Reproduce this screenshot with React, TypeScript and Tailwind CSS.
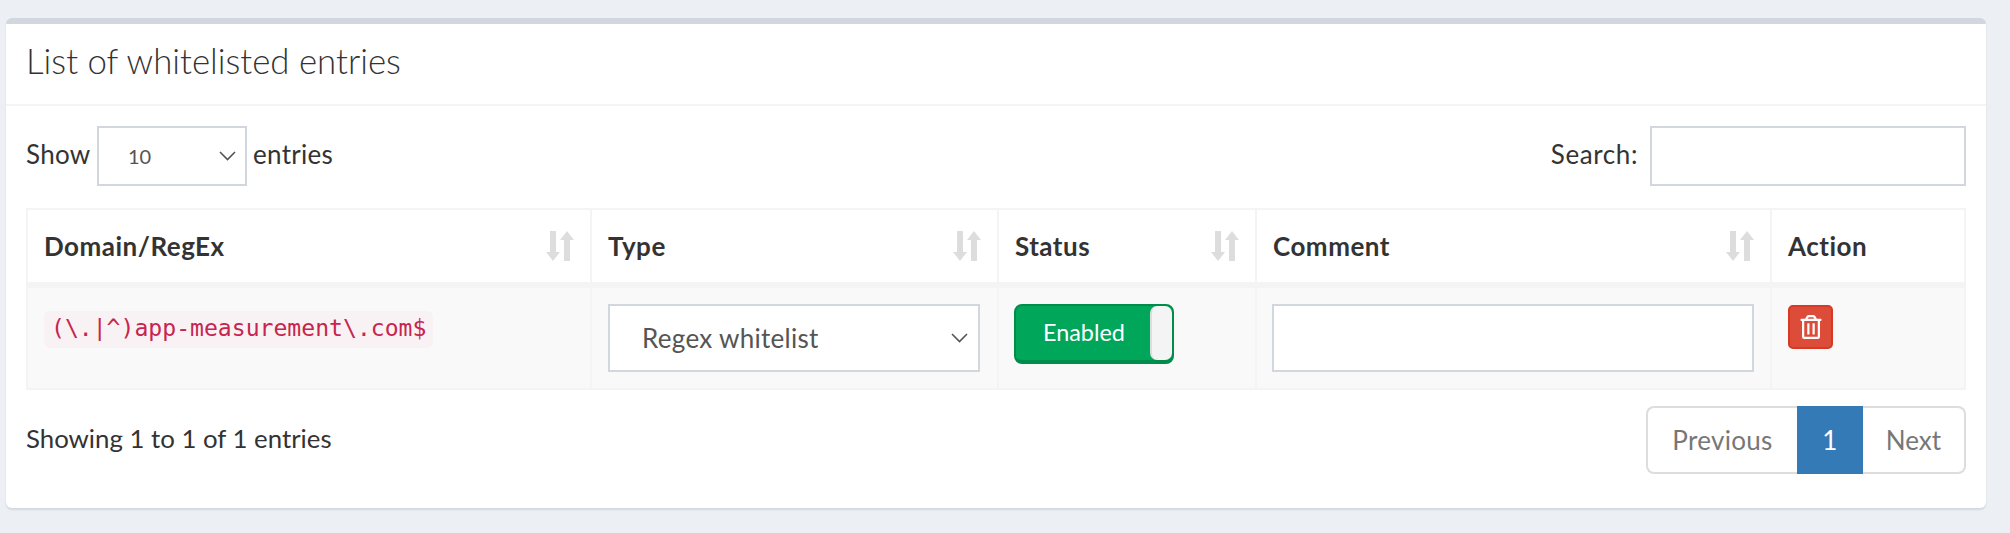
import React from 'react';
import { FaRegTrashAlt } from 'react-icons/fa';

const SortIcon = () => (
  <svg width="28" height="30" viewBox="0 0 28 30" className="shrink-0 text-[#dddddd]" fill="currentColor">
    <path d="M4 0h6v21h4l-7 9-7-9h4z" />
    <path d="M21 0l7 9h-4v21h-6V9h-4z" />
  </svg>
);

const Chevron = () => (
  <svg width="17" height="10" viewBox="0 0 17 10" fill="none" stroke="#555555" strokeWidth="1.6" className="shrink-0">
    <path d="M1 1l7.5 7.5L16 1" />
  </svg>
);

const SortHeader = ({ label, className }: { label: string; className: string }) => (
  <th className={`h-[80px] border-t-2 border-r-2 border-b-[6px] border-[#f4f4f4] p-0 pl-[16px] pr-[16px] text-left align-middle ${className}`}>
    <div className="flex items-center justify-between">
      <span>{label}</span>
      <SortIcon />
    </div>
  </th>
);

export default function App() {
  return (
    <div className="min-h-[533px] bg-[#ecf0f5] pt-[18px] pl-[6px] font-['Lato',sans-serif] text-[26px] tracking-[0.3px] text-[#333333]">
      <div className="w-[1980px] h-[490px] rounded-[6px] border-t-[6px] border-[#d2d6de] bg-white shadow-[0_2px_2px_rgba(0,0,0,0.1)]">
        <div className="flex h-[82px] items-center border-b-2 border-[#f4f4f4] pl-[20px] pb-[6px]">
          <h3 className="text-[34.8px] font-light tracking-normal text-[#333333]">List of whitelisted entries</h3>
        </div>

        <div className="px-[20px] pt-[20px]">
          <div className="flex h-[60px] items-center justify-between">
            <div className="flex items-center">
              <span className="w-[71px] pb-[4px]">Show</span>
              <div className="flex h-[60px] w-[150px] items-center justify-between border-2 border-[#d2d6de] pl-[29px] pr-[9px] text-[20px] tracking-normal text-[#555555]">
                <span>10</span>
                <Chevron />
              </div>
              <span className="ml-[6px] pb-[4px]">entries</span>
            </div>
            <div className="flex items-center gap-[12px]">
              <span className="pb-[4px] tracking-[0.6px]">Search:</span>
              <div className="h-[60px] w-[316px] border-2 border-[#d2d6de]" />
            </div>
          </div>

          <table className="mt-[22px] w-[1940px] table-fixed border-separate border-spacing-0">
            <colgroup>
              <col className="w-[566px]" />
              <col className="w-[407px]" />
              <col className="w-[258px]" />
              <col className="w-[515px]" />
              <col className="w-[194px]" />
            </colgroup>
            <thead>
              <tr className="font-bold tracking-[0.5px]">
                <SortHeader label="Domain/RegEx" className="border-l-2" />
                <SortHeader label="Type" className="" />
                <SortHeader label="Status" className="" />
                <SortHeader label="Comment" className="" />
                <th className="h-[80px] border-t-2 border-r-2 border-b-[6px] border-[#f4f4f4] p-0 pl-[16px] text-left align-middle">
                  Action
                </th>
              </tr>
            </thead>
            <tbody>
              <tr className="bg-[#f9f9f9]">
                <td className="h-[102px] border-b-2 border-l-2 border-r-2 border-[#f4f4f4] p-0 pl-[16px] pt-[19px] align-top">
                  <code className="inline-block h-[37px] rounded-[6px] bg-[#f9f2f4] px-[7px] font-['DejaVu_Sans_Mono',monospace] text-[23.1px] leading-[34px] tracking-normal text-[#c7254e]">
                    {'(\\.|^)app-measurement\\.com$'}
                  </code>
                </td>
                <td className="border-b-2 border-r-2 border-[#f4f4f4] p-0 pl-[16px] pt-[16px] align-top">
                  <div className="flex h-[68px] w-[372px] items-center justify-between border-2 border-[#d2d6de] bg-white pl-[32px] pr-[10px] text-[#555555]">
                    <span>Regex whitelist</span>
                    <Chevron />
                  </div>
                </td>
                <td className="border-b-2 border-r-2 border-[#f4f4f4] p-0 pl-[15px] pt-[16px] align-top">
                  <div className="flex h-[60px] w-[160px] items-center justify-between rounded-[8px] border-2 border-b-[4px] border-[#008d4c] bg-[#00a65a] text-[23.4px] tracking-normal text-white">
                    <span className="pl-[27px]">Enabled</span>
                    <div className="h-full w-[22px] rounded-[7px] border-l-2 border-[#dddddd] bg-[#f4f4f4]" />
                  </div>
                </td>
                <td className="border-b-2 border-r-2 border-[#f4f4f4] p-0 pl-[15px] pt-[16px] align-top">
                  <div className="h-[68px] w-[482px] border-2 border-[#d2d6de] bg-white" />
                </td>
                <td className="border-b-2 border-r-2 border-[#f4f4f4] p-0 pl-[16px] pt-[17px] align-top">
                  <div className="flex h-[44px] w-[45px] items-center justify-center rounded-[5px] border-2 border-[#d73925] bg-[#dd4b39] text-white">
                    <FaRegTrashAlt size={24} />
                  </div>
                </td>
              </tr>
            </tbody>
          </table>

          <div className="mt-[16px] flex h-[68px] items-center justify-between">
            <span className="pb-[4px] text-[25.8px] tracking-normal">Showing 1 to 1 of 1 entries</span>
            <div className="flex h-[68px] text-[#777777]">
              <div className="flex w-[151px] items-center justify-center rounded-l-[8px] border-2 border-r-0 border-[#dddddd] bg-white">
                Previous
              </div>
              <div className="flex w-[66px] items-center justify-center bg-[#337ab7] text-white">1</div>
              <div className="flex w-[103px] items-center justify-center rounded-r-[8px] border-2 border-l-0 border-[#dddddd] bg-white tracking-normal">
                Next
              </div>
            </div>
          </div>
        </div>
      </div>
    </div>
  );
}
